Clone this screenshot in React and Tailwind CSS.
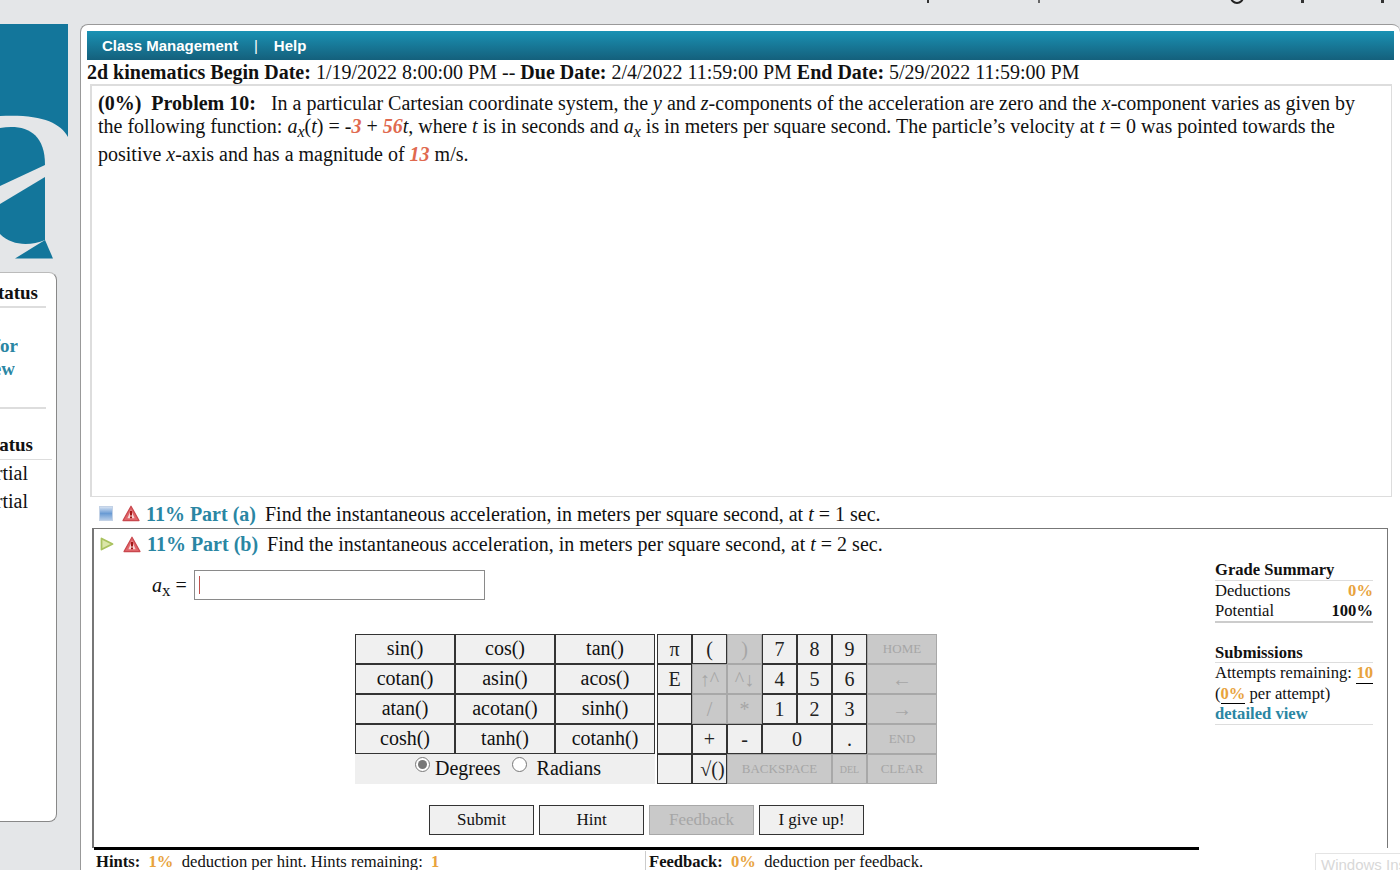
import React from 'react'

const FUNCS = ['sin()', 'cos()', 'tan()', 'cotan()', 'asin()', 'acos()', 'atan()', 'acotan()', 'sinh()', 'cosh()', 'tanh()', 'cotanh()']

const KEYS = [
  { t: 'π' }, { t: '(' }, { t: ')', off: true }, { t: '7' }, { t: '8' }, { t: '9' }, { t: 'HOME', off: true, small: true },
  { t: 'E' }, { t: '↑^', off: true }, { t: '^↓', off: true }, { t: '4' }, { t: '5' }, { t: '6' }, { t: '←', off: true },
  { t: '' }, { t: '/', off: true }, { t: '*', off: true }, { t: '1' }, { t: '2' }, { t: '3' }, { t: '→', off: true },
  { t: '' }, { t: '+' }, { t: '-' }, { t: '0', span: 'col-span-2' }, { t: '.' }, { t: 'END', off: true, small: true },
  { t: '' }, { t: '√()', span: 'pl-[6px]' }, { t: 'BACKSPACE', off: true, small: true, span: 'col-span-3' }, { t: 'DEL', off: true, tiny: true }, { t: 'CLEAR', off: true, small: true },
]

const Key = ({ k }) => (
  <div
    className={`flex items-center justify-center border ${k.span || ''} ${k.off ? 'bg-[#c9c9c9] border-[#a8a8a8] text-[#a6a6a6]' : 'bg-[#f0f0f0] border-[#333] text-[#222]'} ${k.tiny ? 'text-[10px]' : k.small ? 'text-[13px]' : 'text-[20px]'}`}
  >
    {k.t}
  </div>
)

const Warn = () => (
  <svg width="18" height="17" viewBox="0 0 18 17" className="shrink-0">
    <path d="M9 1.2 L17 15.6 H1 Z" fill="#e0656a" stroke="#c9484e" strokeLinejoin="round" strokeWidth="1.2" />
    <path d="M9 5 L12.6 13.2 H5.4 Z" fill="#f6d5d5" />
    <path d="M9 6 V10.4" stroke="#a01818" strokeWidth="2" />
    <path d="M9 11.4 V13.2" stroke="#a01818" strokeWidth="2" />
  </svg>
)

const ClippedRight = ({ className, children }) => (
  <div className={`flex justify-end overflow-hidden whitespace-nowrap ${className}`}>{children}</div>
)

const Logo = () => (
  <svg width="69" height="236" viewBox="0 24 69 236" className="block">
    <path d="M0 24 H68 V137 C60 122 40 114 0 116 Z" fill="#13769b" />
    <path d="M0 128 C25 124 45 132 45 165 L0 186 Z" fill="#13769b" />
    <path d="M0 204 L45 177 V240 C30 246 12 246 0 234 Z" fill="#13769b" />
    <path d="M15 258.5 L45 240 L53 258.5 Z" fill="#13769b" />
  </svg>
)

export default function App() {
  return (
    <div className="h-[870px] w-[1400px] overflow-hidden bg-[#e4e6e8] font-['Liberation_Serif',serif] text-[#111]">
      <div className="flex h-[24px] items-start overflow-hidden">
        <div className="ml-[927px] h-[3px] w-[2px] bg-[#333]" />
        <div className="ml-[109px] h-[3px] w-[2px] bg-[#666]" />
        <div className="ml-[190px] -mt-[10px] h-[14px] w-[14px] rounded-full border-2 border-[#222]" />
        <div className="ml-[57px] h-[3px] w-[3px] bg-[#333]" />
        <div className="ml-[77px] h-[3px] w-[3px] bg-[#333]" />
      </div>
      <div className="flex">
        <div className="mr-[11px] w-[69px] shrink-0">
          <Logo />
          <div className="mt-[12px] h-[550px] w-[57px] rounded-r-lg border border-l-0 border-[#bbb] border-r-[#888] border-b-[#888] bg-white pt-[10px]">
            <ClippedRight className="mr-[18px] text-[19px] font-bold leading-[20px]">Status</ClippedRight>
            <div className="mr-[10px] mt-[3px] h-[2px] bg-[#ddd]" />
            <ClippedRight className="mr-[38px] mt-[26px] text-[19px] font-bold leading-[23px] text-[#2a86a3]">Score for</ClippedRight>
            <ClippedRight className="mr-[41px] text-[19px] font-bold leading-[23px] text-[#2a86a3]">View</ClippedRight>
            <div className="mr-[10px] mt-[27px] h-[2px] bg-[#ddd]" />
            <ClippedRight className="mr-[23px] mt-[26px] text-[19px] font-bold leading-[20px]">Status</ClippedRight>
            <div className="mr-[4px] mt-[4px] h-px bg-[#ddd]" />
            <ClippedRight className="-mt-px mr-[28px] text-[20px] leading-[28px]">Partial</ClippedRight>
            <ClippedRight className="mr-[28px] text-[20px] leading-[28px]">Partial</ClippedRight>
          </div>
        </div>

        <div className="h-[846px] w-[1320px] rounded-t-lg border-l border-t border-[#999] bg-white pl-[6px] pt-[6px]">
          <div className="flex h-[29px] w-[1307px] items-center gap-[16px] bg-gradient-to-b from-[#1a92b4] to-[#14607c] pl-[15px] pt-[2px] font-['Liberation_Sans',sans-serif] text-[15px] font-bold text-white">
            <span>Class Management</span>
            <span className="font-normal">|</span>
            <span>Help</span>
          </div>
          <div className="h-[24px] whitespace-nowrap text-[20px] leading-[24px]">
            <b>2d kinematics Begin Date:</b> 1/19/2022 8:00:00 PM -- <b>Due Date:</b> 2/4/2022 11:59:00 PM <b>End Date:</b> 5/29/2022 11:59:00 PM
          </div>

          <div className="ml-[3px] h-[413px] w-[1302px] border border-l-2 border-t-2 border-[#ddd] px-[6px] pt-[6px] text-[20px] whitespace-nowrap">
            <div className="h-[23px] leading-[23px]">
              <b>(0%)&nbsp; Problem 10:</b>&nbsp;&nbsp; In a particular Cartesian coordinate system, the <i>y</i> and <i>z</i>-components of the acceleration are zero and the <i>x</i>-component varies as given by
            </div>
            <div className="h-[28px] leading-[23px]">
              the following function: <i>a<sub className="text-[16px]">x</sub></i>(<i>t</i>) = -<b className="italic text-[#e0694f]">3</b> + <b className="italic text-[#e0694f]">56</b><i>t</i>, where <i>t</i> is in seconds and <i>a<sub className="text-[16px]">x</sub></i> is in meters per square second. The particle’s velocity at <i>t</i> = 0 was pointed towards the
            </div>
            <div className="h-[23px] leading-[23px]">
              positive <i>x</i>-axis and has a magnitude of <b className="italic text-[#e0694f]">13</b> m/s.
            </div>
          </div>

          <div className="ml-[12px] flex h-[31px] items-center whitespace-nowrap pt-[2px] text-[20px]">
            <div className="mr-[9px] h-[15px] w-[14px] border border-[#c3d2e6] bg-gradient-to-b from-[#d3e0f1] via-[#6a9bd4] to-[#b4cbe7]" />
            <Warn />
            <b className="ml-[6px] text-[#2a86a3]">11% Part (a)</b>
            <span className="ml-[9px]">Find the instantaneous acceleration, in meters per square second, at <i>t</i> = 1 sec.</span>
          </div>

          <div className="ml-[5px] h-[320px] w-[1296px] border-l-2 border-r border-t border-[#777]">
            <div className="flex h-[30px] items-center whitespace-nowrap text-[20px]">
              <svg width="14" height="14" viewBox="0 0 14 14" className="ml-[6px] mr-[9px] shrink-0">
                <path d="M1.5 1.5 L12.5 7 L1.5 12.5 Z" fill="#dbe6a8" stroke="#a9c25e" strokeWidth="1.8" strokeLinejoin="round" />
              </svg>
              <Warn />
              <b className="ml-[6px] text-[#2a86a3]">11% Part (b)</b>
              <span className="ml-[9px]">Find the instantaneous acceleration, in meters per square second, at <i>t</i> = 2 sec.</span>
            </div>

            <div className="flex">
              <div className="w-[1105px] shrink-0">
                <div className="ml-[58px] mt-[11px] flex h-[30px] items-center">
                  <span className="w-[42px] text-[20px]"><i>a</i><sub className="text-[17px]">x</sub> =</span>
                  <div className="flex h-[30px] w-[291px] items-center border border-[#8a8a8a] pl-[4px]">
                    <div className="h-[18px] w-px bg-[#c0504d]" />
                  </div>
                </div>

                <div className="mr-[1px] mt-[34px] flex justify-center gap-[2px]">
                  <div className="w-[300px]">
                    <div className="grid grid-cols-3 auto-rows-[30px]">
                      {FUNCS.map((f) => (
                        <div key={f} className="flex items-center justify-center border border-[#333] bg-[#f0f0f0] pb-[2px] text-[20px]">{f}</div>
                      ))}
                    </div>
                    <div className="flex h-[30px] items-center justify-center bg-[#efefef] pb-[2px] pl-[6px] text-[20px]">
                      <input type="radio" name="mode" defaultChecked className="mb-[7px] mr-[5px] h-[15px] w-[15px] accent-[#777]" />
                      <span className="mr-[11px]">Degrees</span>
                      <input type="radio" name="mode" className="mb-[7px] mr-[10px] h-[15px] w-[15px]" />
                      <span>Radians</span>
                    </div>
                  </div>
                  <div className="grid w-[280px] grid-cols-[repeat(6,35px)_70px] auto-rows-[30px]">
                    {KEYS.map((k, i) => <Key key={i} k={k} />)}
                  </div>
                </div>

                <div className="mt-[21px] flex justify-center gap-[5px] text-[17px]">
                  <button className="h-[30px] w-[105px] border border-[#333] bg-[#f0f0f0]">Submit</button>
                  <button className="h-[30px] w-[105px] border border-[#333] bg-[#f0f0f0]">Hint</button>
                  <button className="h-[30px] w-[105px] border border-[#a8a8a8] bg-[#c9c9c9] text-[#a6a6a6]">Feedback</button>
                  <button className="h-[30px] w-[105px] border border-[#333] bg-[#f0f0f0]">I give up!</button>
                </div>

                <div className="mt-[12px] flex border-t-[3px] border-black pt-[1px] text-[16.6px] leading-[22px] whitespace-nowrap">
                  <div className="w-[552px] border-r border-[#ccc] pl-[2px]">
                    <b>Hints:</b>&nbsp; <b className="text-[#e8a33d]">1%</b>&nbsp; deduction per hint. Hints remaining:&nbsp; <b className="text-[#e8a33d]">1</b>
                  </div>
                  <div className="pl-[3px]">
                    <b>Feedback:</b>&nbsp; <b className="text-[#e8a33d]">0%</b>&nbsp; deduction per feedback.
                  </div>
                </div>
              </div>

              <div className="ml-[16px] w-[158px] pt-[1px] text-[16.6px] leading-[20px]">
                <div className="border-b border-[#ddd] font-bold">Grade Summary</div>
                <div className="flex justify-between"><span>Deductions</span><b className="text-[#e8a33d]">0%</b></div>
                <div className="flex justify-between border-b-2 border-[#ccc]"><span>Potential</span><b>100%</b></div>
                <div className="mt-[20px] border-b border-[#ddd] leading-[19px] font-bold">Submissions</div>
                <div className="flex justify-between whitespace-nowrap"><span>Attempts remaining:</span><b className="border-b border-black text-[#e8a33d]">10</b></div>
                <div>(<b className="border-b border-black text-[#e8a33d]">0%</b> per attempt)</div>
                <div className="border-b border-[#ddd] font-bold text-[#2a86a3]">detailed view</div>
              </div>
            </div>
          </div>
        </div>
      </div>
      <div className="absolute left-[1315px] top-[853px] h-[17px] w-[85px] overflow-hidden border-l border-t border-[#e4e4e4] pl-[5px] font-['Liberation_Sans',sans-serif] text-[15px] text-[#d8d8d8] whitespace-nowrap">
        Windows Insider
      </div>
    </div>
  )
}
